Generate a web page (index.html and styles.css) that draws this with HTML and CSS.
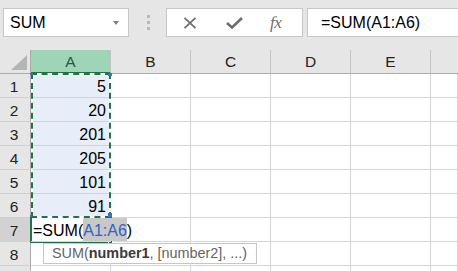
FILE: index.html
```html
<!DOCTYPE html>
<html lang="en">
<head>
    <meta charset="UTF-8">
    <meta name="viewport" content="width=device-width, initial-scale=1.0">
    <title>SUM</title>
    <link rel="stylesheet" href="styles.css">
</head>
<body>
    <div class="toolbar">
        <div class="name-box">
            <span>SUM</span>
            <span class="caret"></span>
        </div>
        <div class="grip"><i></i><i></i><i></i></div>
        <div class="fx-buttons">
            <svg class="icon-x" width="14" height="12" viewBox="0 0 14 12">
                <path d="M1.5 0.8 L12.5 11.2 M12.5 0.8 L1.5 11.2" stroke="#6e6e6e" stroke-width="1.8" fill="none"/>
            </svg>
            <svg class="icon-check" width="17" height="12" viewBox="0 0 17 12">
                <path d="M1 6 L6 10.5 L16 1" stroke="#6e6e6e" stroke-width="2.6" fill="none"/>
            </svg>
            <span class="fx">fx</span>
        </div>
        <div class="formula">=SUM(A1:A6)</div>
    </div>

    <div class="sheet">
        <!-- header row -->
        <div class="corner">
            <svg width="16" height="15" viewBox="0 0 16 15"><path d="M16 0 L16 15 L0 15 Z" fill="#b5b5b5"/></svg>
        </div>
        <div class="col-head current">A</div>
        <div class="col-head">B</div>
        <div class="col-head">C</div>
        <div class="col-head">D</div>
        <div class="col-head">E</div>
        <div class="col-head last"></div>

        <div class="row-head">1</div>
        <div class="cell picked">5</div>
        <div class="cell"></div><div class="cell"></div><div class="cell"></div><div class="cell"></div><div class="cell"></div>

        <div class="row-head">2</div>
        <div class="cell picked">20</div>
        <div class="cell"></div><div class="cell"></div><div class="cell"></div><div class="cell"></div><div class="cell"></div>

        <div class="row-head">3</div>
        <div class="cell picked">201</div>
        <div class="cell"></div><div class="cell"></div><div class="cell"></div><div class="cell"></div><div class="cell"></div>

        <div class="row-head">4</div>
        <div class="cell picked">205</div>
        <div class="cell"></div><div class="cell"></div><div class="cell"></div><div class="cell"></div><div class="cell"></div>

        <div class="row-head">5</div>
        <div class="cell picked">101</div>
        <div class="cell"></div><div class="cell"></div><div class="cell"></div><div class="cell"></div><div class="cell"></div>

        <div class="row-head">6</div>
        <div class="cell picked">91</div>
        <div class="cell"></div><div class="cell"></div><div class="cell"></div><div class="cell"></div><div class="cell"></div>

        <div class="row-head current">7</div>
        <div class="cell editing">=SUM(<span class="ref">A1:A6</span>)</div>
        <div class="cell"></div><div class="cell"></div><div class="cell"></div><div class="cell"></div><div class="cell"></div>

        <div class="row-head">8</div>
        <div class="cell"></div><div class="cell"></div><div class="cell"></div><div class="cell"></div><div class="cell"></div><div class="cell"></div>

        <div class="row-head"></div>
        <div class="cell"></div><div class="cell"></div><div class="cell"></div><div class="cell"></div><div class="cell"></div><div class="cell"></div>

        <!-- overlays -->
        <div class="active-cell"></div>
        <div class="fill-handle"></div>
        <div class="ants"></div>
        <span class="mark mark-tl"></span>
        <span class="mark mark-tr"></span>
        <span class="mark mark-bl"></span>
        <span class="mark mark-br"></span>

        <div class="tooltip">SUM(<b>number1</b>, [number2], ...)</div>
    </div>
</body>
</html>
```

FILE: styles.css
```css
* {
    margin: 0;
    padding: 0;
    box-sizing: border-box;
}

body {
    background: #e6e6e6;
    color: #000;
    font-family: 'Liberation Sans', Arial, sans-serif;
    font-size: 16px;
    width: 458px;
    height: 271px;
    overflow: hidden;
}

/* formula bar */
.toolbar {
    display: flex;
    align-items: flex-start;
    height: 50px;
    padding: 8px 0 0 3px;
}

.name-box {
    display: flex;
    align-items: center;
    justify-content: space-between;
    width: 126px;
    height: 29px;
    background: #fff;
    border: 1px solid #c6c6c6;
    padding: 0 9px 0 6px;
    line-height: 27px;
}

.caret {
    width: 0;
    height: 0;
    border-left: 3.5px solid transparent;
    border-right: 3.5px solid transparent;
    border-top: 4px solid #7f7f7f;
}

.grip {
    display: flex;
    flex-direction: column;
    gap: 3px;
    margin: 7px 0 0 18px;
}

.grip i {
    display: block;
    width: 3px;
    height: 3px;
    background: #b8b8b8;
}

.fx-buttons {
    display: flex;
    align-items: center;
    width: 137px;
    height: 29px;
    margin-left: 16px;
    padding-left: 16px;
    background: #fff;
    border: 1px solid #c6c6c6;
}

.icon-check {
    margin-left: 29px;
}

.fx {
    margin-left: 27px;
    font-family: 'Liberation Serif', 'Times New Roman', serif;
    font-style: italic;
    font-size: 17px;
    color: #6e6e6e;
    letter-spacing: -0.5px;
}

.formula {
    flex: 1;
    height: 29px;
    margin-left: 4px;
    padding-left: 13px;
    background: #fff;
    border: 1px solid #c6c6c6;
    border-right: none;
    line-height: 27px;
}

/* grid */
.sheet {
    position: relative;
    display: grid;
    grid-template-columns: 31px repeat(5, 80px) 1fr;
    grid-template-rows: repeat(10, 24px);
    height: 221px;
    background: #fff;
    overflow: hidden;
}

.corner {
    display: flex;
    align-items: flex-end;
    justify-content: flex-end;
    padding: 0 3px 3px 0;
    background: #e6e6e6;
    border-right: 1px solid #ababab;
    border-bottom: 1px solid #ababab;
}

.col-head {
    background: #e6e6e6;
    border-right: 1px solid #c4c4c4;
    border-bottom: 1px solid #ababab;
    text-align: center;
    line-height: 23px;
    font-size: 15.5px;
    color: #222;
}

.col-head.current {
    background: #9fd5b7;
    color: #1d5c39;
    border-bottom: 2px solid #217346;
}

.col-head.last {
    border-right: none;
}

.row-head {
    background: #e6e6e6;
    border-right: 1px solid #ababab;
    border-bottom: 1px solid #d0d0d0;
    text-align: center;
    line-height: 25px;
    font-size: 15.5px;
    color: #222;
    padding-right: 2px;
}

.row-head.current {
    background: #d2d2d2;
}

.cell {
    border-right: 1px solid #d4d4d4;
    border-bottom: 1px solid #d4d4d4;
    line-height: 25px;
    white-space: nowrap;
}

.cell.picked {
    background: #e7eef9;
    text-align: right;
    padding-right: 4px;
}

.cell.editing {
    position: relative;
    z-index: 3;
    overflow: visible;
    padding-left: 2px;
}

.ref {
    display: inline-block;
    height: 23px;
    line-height: 25px;
    background: #c8c8c8;
    color: #2f63c4;
}

/* selection overlays */
.active-cell {
    position: absolute;
    left: 30px;
    top: 166px;
    width: 82px;
    height: 27px;
    border: 2px solid #217346;
    z-index: 2;
}

.fill-handle {
    position: absolute;
    left: 108px;
    top: 190px;
    width: 5px;
    height: 5px;
    background: #217346;
    border: 1px solid #fff;
    z-index: 2;
}

.ants {
    position: absolute;
    left: 31px;
    top: 23px;
    width: 80px;
    height: 145px;
    border: 2px solid #fff;
    z-index: 4;
}

.ants::after {
    content: '';
    position: absolute;
    inset: -2px;
    border: 2px dashed #217346;
}

.mark {
    position: absolute;
    background: #3b6fcb;
    z-index: 5;
}

.mark-tl { left: 30px; top: 23px; width: 3px; height: 2px; }
.mark-tr { left: 108px; top: 23px; width: 4px; height: 3px; }
.mark-bl { left: 30px; top: 165px; width: 2px; height: 2px; }
.mark-br { left: 108px; top: 163px; width: 4px; height: 4px; }

.tooltip {
    position: absolute;
    left: 43px;
    top: 193px;
    width: 214px;
    height: 21px;
    padding-left: 8px;
    background: #fff;
    border: 1px solid #c6c6c6;
    font-size: 14.4px;
    line-height: 19px;
    color: #646464;
    white-space: nowrap;
    z-index: 6;
}

.tooltip b {
    color: #3a3a3a;
}
```
